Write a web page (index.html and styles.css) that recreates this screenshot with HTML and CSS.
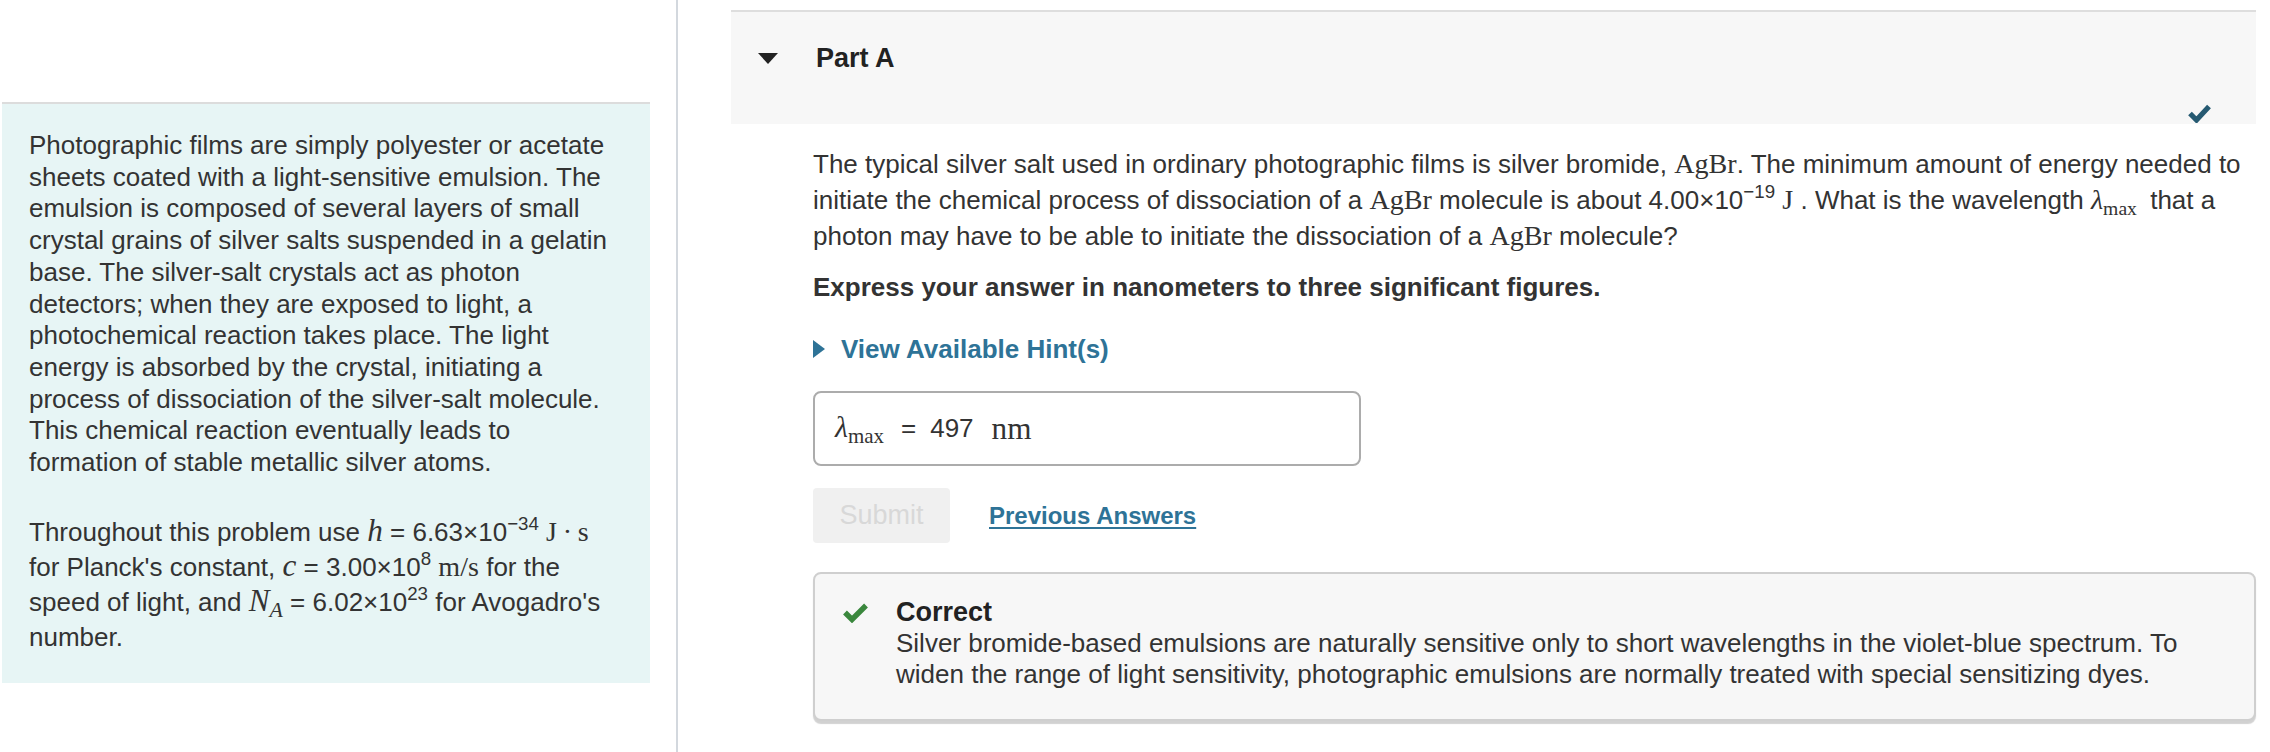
FILE: index.html
```html
<!DOCTYPE html>
<html lang="en">
<head>
<meta charset="utf-8">
<title>Part A</title>
<link rel="stylesheet" href="styles.css">
</head>
<body>
<div class="page">
  <aside class="left">
    <div class="intro">
      <p>Photographic films are simply polyester or acetate sheets coated with a light-sensitive emulsion. The emulsion is composed of several layers of small crystal grains of silver salts suspended in a gelatin base. The silver-salt crystals act as photon detectors; when they are exposed to light, a photochemical reaction takes place. The light energy is absorbed by the crystal, initiating a process of dissociation of the silver-salt molecule. This chemical reaction eventually leads to formation of stable metallic silver atoms.</p>
      <p>Throughout this problem use <span class="m i big">h</span> = 6.63×10<sup>−34</sup> <span class="m">J&#8201;·&#8201;s</span> for Planck's constant, <span class="m i big">c</span> = 3.00×10<sup>8</sup> <span class="m">m/s</span> for the speed of light, and <span class="m i big">N<sub>A</sub></span> = 6.02×10<sup>23</sup> for Avogadro's number.</p>
    </div>
  </aside>
  <main class="right">
    <section class="part">
      <header class="part-head">
        <div class="part-title">
          <svg class="caret-down" width="20" height="11" viewBox="0 0 20 11"><polygon points="0,0 20,0 10,11" fill="#222"/></svg>
          <h2>Part A</h2>
        </div>
        <svg class="done" width="25" height="20" viewBox="0 0 25 20"><path d="M3 10.5 L9.5 17 L22 3.5" fill="none" stroke="#265a72" stroke-width="5.2" stroke-linejoin="miter"/></svg>
      </header>
      <div class="part-body">
        <p class="q">The typical silver salt used in ordinary photographic films is silver bromide, <span class="m">AgBr</span>. The minimum amount of energy needed to initiate the chemical process of dissociation of a <span class="m">AgBr</span> molecule is about 4.00×10<sup>−19</sup> <span class="m">J</span> . What is the wavelength <span class="m lam"><i>λ</i><sub>max</sub></span> that a photon may have to be able to initiate the dissociation of a <span class="m">AgBr</span> molecule?</p>
        <p class="express">Express your answer in nanometers to three significant figures.</p>
        <div class="hint">
          <svg width="12" height="18" viewBox="0 0 12 18"><polygon points="0,0 12,9 0,18" fill="#2e7397"/></svg>
          <span>View Available Hint(s)</span>
        </div>
        <div class="answer">
          <span class="m ans-lam"><i>λ</i><sub>max</sub></span>
          <span class="eq">=</span>
          <span class="val">497</span>
          <span class="m unit">nm</span>
        </div>
        <div class="actions">
          <span class="submit">Submit</span>
          <a class="prev">Previous Answers</a>
        </div>
        <div class="feedback">
          <svg class="ok" width="27" height="21" viewBox="0 0 27 21"><path d="M3 10.5 L10 17.5 L24 3.5" fill="none" stroke="#3a873d" stroke-width="5.4"/></svg>
          <div class="fb-text">
            <div class="fb-title">Correct</div>
            <div>Silver bromide-based emulsions are naturally sensitive only to short wavelengths in the violet-blue spectrum. To widen the range of light sensitivity, photographic emulsions are normally treated with special sensitizing dyes.</div>
          </div>
        </div>
      </div>
    </section>
  </main>
</div>
</body>
</html>
```

FILE: styles.css
```css
* { box-sizing: border-box; }
html, body { margin: 0; padding: 0; background: #fff; }
body {
  font-family: "Liberation Sans", Arial, Helvetica, sans-serif;
  color: #333;
  font-size: 26px;
  width: 2270px;
  height: 752px;
  overflow: hidden;
}
.page { display: flex; height: 752px; }

.left {
  width: 678px;
  flex: none;
  padding: 102px 0 0 2px;
  border-right: 2px solid #d3d8de;
}
.intro {
  width: 648px;
  background: #e7f5f5;
  border-top: 2px solid #dcdcdc;
  padding: 26px 30px 28px 27px;
}
.intro p { margin: 0; line-height: 31.7px; }
.intro p + p { margin-top: 36px; line-height: 35px; }

.m { font-family: "Liberation Serif", "Times New Roman", serif; font-size: 1.08em; line-height: 0; }
.m.big { font-size: 1.2em; }
.i, .m i { font-style: italic; }
sup {
  font-size: 0.72em;
  vertical-align: baseline;
  position: relative;
  top: -0.6em;
  line-height: 0;
}
sub {
  font-size: 0.7em;
  vertical-align: baseline;
  position: relative;
  top: 0.3em;
  line-height: 0;
}
.m sub { font-style: normal; }
.m.i sub { font-style: italic; }
.lam { margin-right: 6px; }

.right { flex: 1; padding: 10px 14px 0 53px; }
.part-head {
  height: 114px;
  border-top: 2px solid #dedede;
  background: #f7f7f7;
  display: flex;
  flex-direction: column;
  justify-content: space-between;
  padding: 30px 44px 1px 27px;
}
.part-title { display: flex; align-items: center; height: 32px; gap: 38px; }
.part-title h2 { margin: 0; font-size: 27px; font-weight: bold; color: #222; line-height: 32px; }
.done { align-self: flex-end; display: block; }

.part-body { padding: 22px 0 0 82px; }
.q { margin: 0; line-height: 36px; }
.express { margin: 17px 0 0; font-weight: bold; line-height: 32px; }
.hint {
  margin-top: 30px;
  display: flex;
  align-items: center;
  gap: 16px;
  height: 32px;
  color: #2e7397;
  font-weight: bold;
}
.answer {
  margin-top: 26px;
  width: 548px;
  height: 75px;
  border: 2px solid #acacac;
  border-radius: 8px;
  display: flex;
  align-items: center;
  padding-left: 20px;
}
.ans-lam { font-size: 1.15em; }
.eq { margin-left: 17px; }
.val { margin-left: 14px; }
.unit { margin-left: 18px; font-size: 1.2em; }

.actions { margin-top: 22px; display: flex; align-items: center; gap: 39px; }
.submit {
  width: 137px;
  height: 55px;
  background: #f0f0f0;
  color: #d8d8d8;
  border-radius: 4px;
  display: flex;
  align-items: center;
  justify-content: center;
  font-size: 27px;
}
.prev { color: #2e7397; font-weight: bold; font-size: 24px; text-decoration: underline; text-underline-offset: 3px; }

.feedback {
  margin-top: 29px;
  height: 149px;
  border: 2px solid #cfcfcf;
  border-radius: 8px;
  background: #f7f7f7;
  box-shadow: 0 3px 1px rgba(0,0,0,0.18);
  display: flex;
  align-items: flex-start;
  gap: 27px;
  padding: 23px 30px 0 27px;
}
.ok { margin-top: 5px; flex: none; display: block; }
.fb-text { line-height: 31px; }
.fb-title { font-weight: bold; font-size: 27px; color: #222; }
```
